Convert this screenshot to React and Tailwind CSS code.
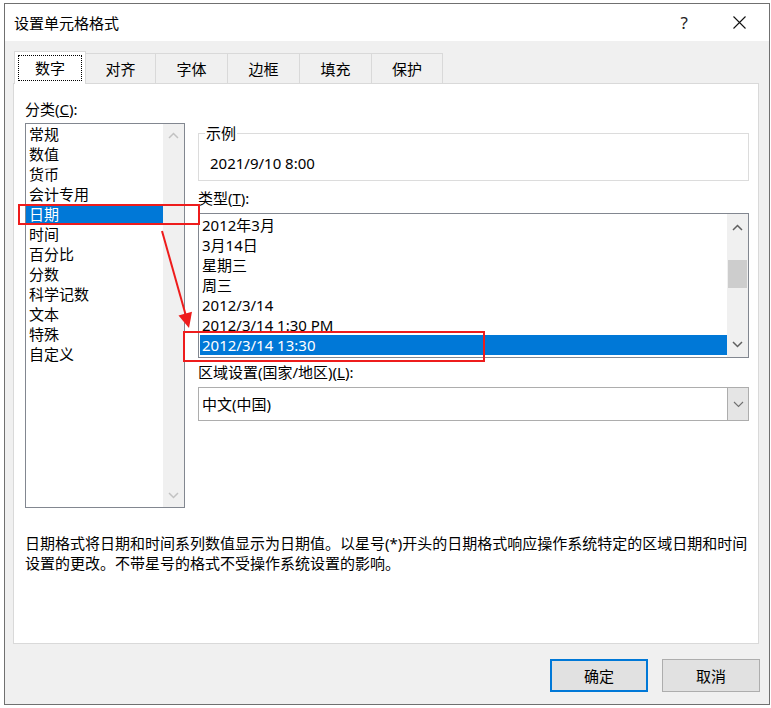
import React from 'react'

const categories = ['常规', '数值', '货币', '会计专用', '日期', '时间', '百分比', '分数', '科学记数', '文本', '特殊', '自定义']
const types = ['2012年3月', '3月14日', '星期三', '周三', '2012/3/14', '2012/3/14 1:30 PM', '2012/3/14 13:30']
const tabs = [
  { name: '数字', w: 'w-[72px]' },
  { name: '对齐', w: 'w-[70px]' },
  { name: '字体', w: 'w-[72px]' },
  { name: '边框', w: 'w-[72px]' },
  { name: '填充', w: 'w-[72px]' },
  { name: '保护', w: 'w-[71px]' },
]

const Chevron = ({ up, color }) => (
  <svg width="11" height="7" viewBox="0 0 11 7">
    <polyline
      points={up ? '1,6 5.5,1.5 10,6' : '1,1 5.5,5.5 10,1'}
      fill="none"
      stroke={color}
      strokeWidth="1.5"
    />
  </svg>
)

const App = () => {
  return (
    <div className="relative w-[771px] h-[708px] bg-white overflow-hidden pl-[4px] pt-[3px] font-['Noto_Sans','Noto_Sans_CJK_SC',sans-serif] text-[15px] text-black">
      {/* dialog */}
      <div className="w-[766px] h-[702px] border border-[#707070] flex flex-col bg-[#f0f0f0]">
        {/* title bar */}
        <div className="h-[37px] bg-white flex items-center justify-between pl-[9px] pr-[23px] shrink-0">
          <span className="leading-[20px]">设置单元格格式</span>
          <div className="flex items-center gap-[45px]">
            <span className="text-[17px] text-[#222] leading-[20px]">?</span>
            <svg width="13" height="13" viewBox="0 0 13 13">
              <path d="M0.5 0.5 L12.5 12.5 M12.5 0.5 L0.5 12.5" stroke="#111" strokeWidth="1.1" />
            </svg>
          </div>
        </div>

        {/* body */}
        <div className="flex-1 flex flex-col pl-[8px] pt-[10px]">
          {/* tabs */}
          <div className="relative z-10 flex items-end h-[33px] -mb-px pl-[1px]">
            {tabs.map((t, i) =>
              i === 0 ? (
                <div key={t.name} className={`${t.w} h-[33px] bg-white border-x border-t border-[#d9d9d9] flex items-center justify-center p-[3px]`}>
                  <div className="w-full h-full border border-dotted border-black flex items-center justify-center leading-[20px]">
                    {t.name}
                  </div>
                </div>
              ) : (
                <div key={t.name} className={`${t.w} h-[31px] bg-[#f0f0f0] border-r border-t border-b border-[#d9d9d9] flex items-center justify-center leading-[20px]`}>
                  {t.name}
                </div>
              )
            )}
          </div>

          {/* panel */}
          <div className="w-[746px] h-[561px] bg-white border border-[#d9d9d9] pl-[11px] pt-[15px] shrink-0">
            <div className="flex items-start gap-[13px]">
              {/* category column */}
              <div className="w-[160px]">
                <div className="leading-[20px] h-[20px]">
                  分类(<span className="underline">C</span>):
                </div>
                <div className="mt-[4px] h-[385px] border border-[#828790] flex">
                  <div className="flex-1">
                    {categories.map((c, i) => (
                      <div
                        key={c}
                        className={`h-[20px] leading-[21px] pl-[3px] ${i === 4 ? 'bg-[#0078d7] text-white' : ''}`}
                      >
                        {c}
                      </div>
                    ))}
                  </div>
                  <div className="w-[21px] bg-[#f0f0f0] flex flex-col justify-between items-center py-[8px]">
                    <Chevron up color="#c2c2c2" />
                    <Chevron color="#c2c2c2" />
                  </div>
                </div>
              </div>

              {/* right column */}
              <div className="w-[551px] pt-[25px]">
                <fieldset className="h-[57px] border border-[#dcdcdc]">
                  <legend className="ml-[6px] px-[1px] leading-[18px]">示例</legend>
                  <div className="pl-[11px] mt-[11px] leading-[20px]">2021/9/10 8:00</div>
                </fieldset>

                <div className="mt-[7px] leading-[20px] h-[20px]">
                  类型(<span className="underline">T</span>):
                </div>
                <div className="mt-[5px] h-[145px] border border-[#828790] flex">
                  <div className="flex-1 pl-[1px] pt-[1px]">
                    {types.map((t, i) => (
                      <div
                        key={t}
                        className={`h-[20px] leading-[21px] pl-[2px] ${i === 6 ? 'bg-[#0078d7] text-white' : ''}`}
                      >
                        {t}
                      </div>
                    ))}
                  </div>
                  <div className="w-[21px] bg-[#f0f0f0] flex flex-col items-center">
                    <div className="h-[26px] flex items-center">
                      <Chevron up color="#606060" />
                    </div>
                    <div className="mt-[20px] w-[19px] h-[28px] bg-[#cdcdcd]" />
                    <div className="flex-1" />
                    <div className="h-[26px] flex items-center">
                      <Chevron color="#606060" />
                    </div>
                  </div>
                </div>

                <div className="mt-[4px] leading-[20px] h-[20px]">
                  区域设置(国家/地区)(<span className="underline">L</span>):
                </div>
                <div className="mt-[5px] h-[34px] border border-[#adadad] flex">
                  <div className="flex-1 pl-[3px] flex items-center leading-[20px]">中文(中国)</div>
                  <div className="w-[21px] bg-[#e5e5e5] border-l border-[#adadad] flex items-center justify-center">
                    <svg width="11" height="7" viewBox="0 0 11 7">
                      <polyline points="1,1 5.5,5.5 10,1" fill="none" stroke="#707070" strokeWidth="1.1" />
                    </svg>
                  </div>
                </div>
              </div>
            </div>

            <div className="mt-[25px] leading-[20px]">
              <div className="whitespace-nowrap">
                日期格式将日期和时间系列数值显示为日期值。以星号(*)开头的日期格式响应操作系统特定的区域日期和时间
              </div>
              <div className="whitespace-nowrap">设置的更改。不带星号的格式不受操作系统设置的影响。</div>
            </div>
          </div>

          {/* buttons */}
          <div className="mt-[15px] flex justify-end gap-[14px] pr-[9px]">
            <button className="w-[98px] h-[33px] bg-[#e1e1e1] border-2 border-[#0078d7] leading-[20px]">确定</button>
            <button className="w-[98px] h-[33px] bg-[#e1e1e1] border border-[#adadad] leading-[20px]">取消</button>
          </div>
        </div>
      </div>

      {/* red annotations */}
      <div className="absolute left-[18px] top-[204px] w-[182px] h-[21px] border-2 border-[#ee1c1c]" />
      <div className="absolute left-[183px] top-[331px] w-[302px] h-[31px] border-2 border-[#ee1c1c]" />
      <svg className="absolute left-0 top-0 pointer-events-none" width="771" height="708">
        <line x1="162" y1="231" x2="186" y2="316" stroke="#ee1c1c" strokeWidth="2" />
        <polygon points="189,328 178.5,315.5 192,311.7" fill="#ee1c1c" />
      </svg>
    </div>
  )
}

export default App
